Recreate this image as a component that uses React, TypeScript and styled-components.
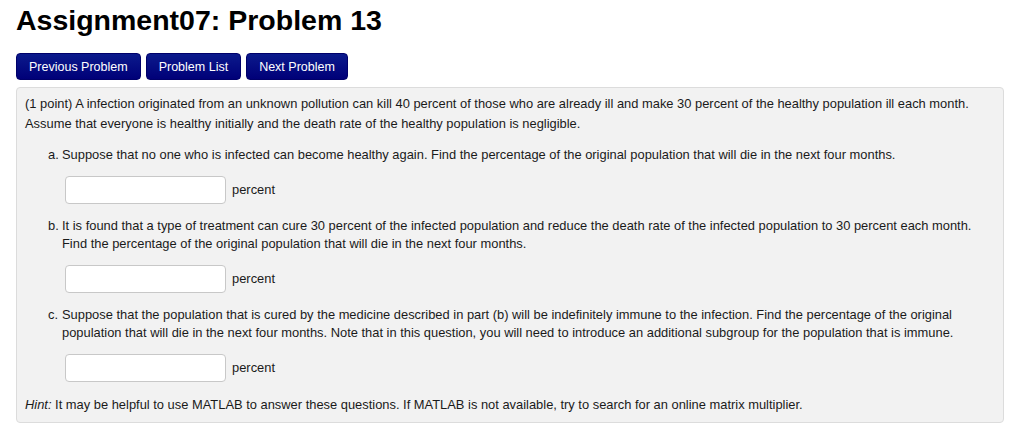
import React from 'react';
import styled, { createGlobalStyle } from 'styled-components';

const GlobalStyle = createGlobalStyle`
  body {
    margin: 0;
    background: #fff;
    font-family: "Liberation Sans", Arial, Helvetica, sans-serif;
    color: #222;
  }
`;

const Page = styled.div`
  padding: 0 20px 0 16px;
`;

const Title = styled.h1`
  margin: 0;
  padding-top: 2px;
  font-size: 28.5px;
  line-height: 36px;
  font-weight: bold;
  color: #000;
`;

const Nav = styled.div`
  display: flex;
  gap: 5px;
  margin-top: 15px;
`;

const NavButton = styled.button`
  height: 27px;
  padding: 0 12px;
  border: 1px solid #00006a;
  border-radius: 4px;
  background: linear-gradient(#0b1a8c, #000078);
  color: #fff;
  font-family: inherit;
  font-size: 12.5px;
  cursor: pointer;
`;

const Panel = styled.div`
  margin-top: 7px;
  padding: 6px 8px 8px 8px;
  background: #f2f2f2;
  border: 1px solid #dcdcdc;
  border-radius: 4px;
  font-size: 12.9px;
  line-height: 20px;
  color: #1a1a1a;
`;

const Intro = styled.p`
  margin: 0;
`;

const Parts = styled.div`
  margin-top: 12px;
  padding-left: 23px;
`;

const Part = styled.div`
  display: flex;
  line-height: 18px;
  margin-bottom: 13px;

  &:last-child {
    margin-bottom: 14px;
  }
`;

const Marker = styled.span`
  width: 14px;
  flex-shrink: 0;
`;

const PartBody = styled.div`
  flex: 1;
`;

const AnswerRow = styled.div`
  display: flex;
  align-items: center;
  gap: 6px;
  margin: 12px 0 0 3px;
`;

const Answer = styled.input`
  width: 161px;
  height: 28px;
  box-sizing: border-box;
  border: 1px solid #c8c8c8;
  border-radius: 4px;
  background: #fff;
`;

const Hint = styled.p`
  margin: 0;
  line-height: 18px;
`;

const parts = [
  {
    m: 'a.',
    text: 'Suppose that no one who is infected can become healthy again. Find the percentage of the original population that will die in the next four months.',
  },
  {
    m: 'b.',
    text: 'It is found that a type of treatment can cure 30 percent of the infected population and reduce the death rate of the infected population to 30 percent each month. Find the percentage of the original population that will die in the next four months.',
  },
  {
    m: 'c.',
    text: 'Suppose that the population that is cured by the medicine described in part (b) will be indefinitely immune to the infection. Find the percentage of the original population that will die in the next four months. Note that in this question, you will need to introduce an additional subgroup for the population that is immune.',
  },
];

const App = () => (
  <Page>
    <GlobalStyle />
    <Title>Assignment07: Problem 13</Title>
    <Nav>
      <NavButton>Previous Problem</NavButton>
      <NavButton>Problem List</NavButton>
      <NavButton>Next Problem</NavButton>
    </Nav>
    <Panel>
      <Intro>
        (1 point) A infection originated from an unknown pollution can kill 40 percent of those who are already ill and make 30 percent of the healthy population ill each month. Assume that everyone is healthy initially and the death rate of the healthy population is negligible.
      </Intro>
      <Parts>
        {parts.map((p) => (
          <Part key={p.m}>
            <Marker>{p.m}</Marker>
            <PartBody>
              {p.text}
              <AnswerRow>
                <Answer type="text" />
                percent
              </AnswerRow>
            </PartBody>
          </Part>
        ))}
      </Parts>
      <Hint>
        <i>Hint:</i> It may be helpful to use MATLAB to answer these questions. If MATLAB is not available, try to search for an online matrix multiplier.
      </Hint>
    </Panel>
  </Page>
);

export default App;
